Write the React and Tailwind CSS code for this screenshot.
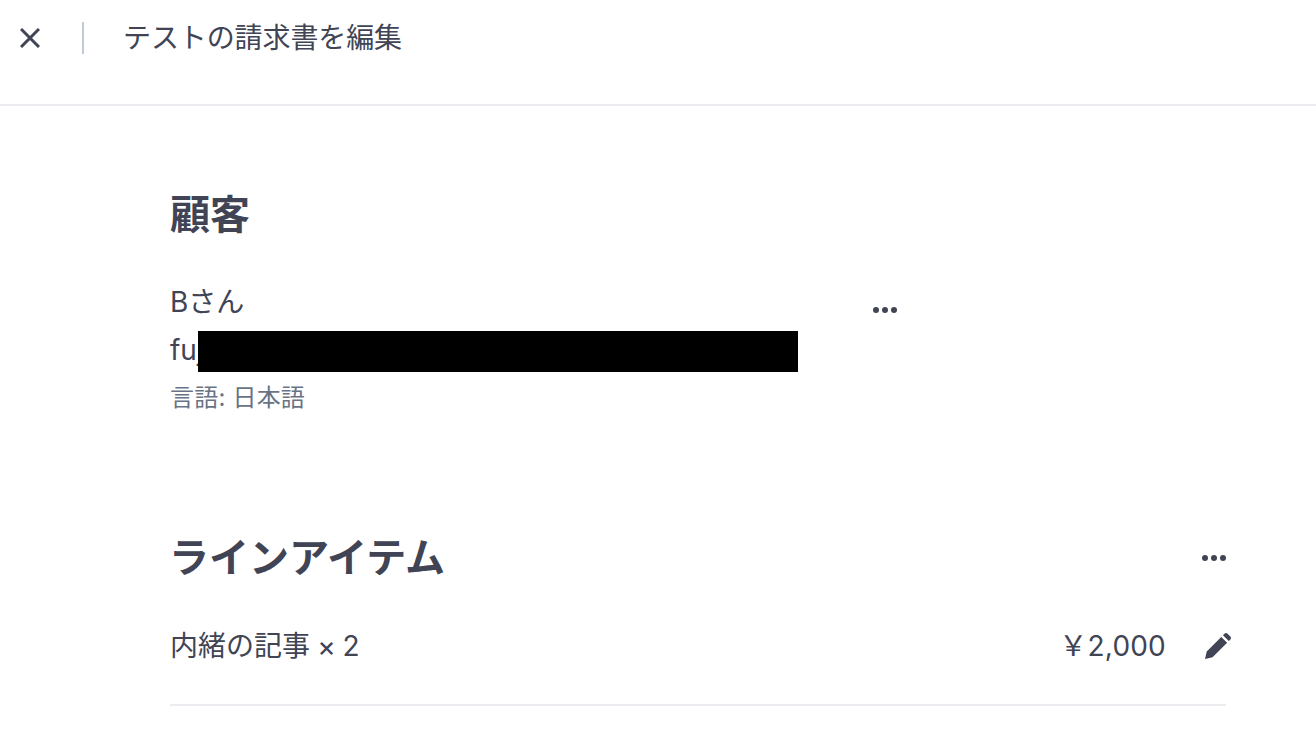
const fontStack = "font-['Inter','Noto_Sans_CJK_JP',sans-serif]";

function MoreDots() {
  return (
    <svg width="24" height="6" viewBox="0 0 24 6" fill="#404454" aria-hidden>
      <circle cx="3" cy="3" r="3" />
      <circle cx="12" cy="3" r="3" />
      <circle cx="21" cy="3" r="3" />
    </svg>
  );
}

export default function App() {
  return (
    <div className={`${fontStack} h-[734px] overflow-hidden bg-white text-[#404454]`}>
      {/* Header */}
      <header className="flex h-[106px] border-b-2 border-[#ebebf0] pl-[20px] pt-[22px]">
        <div className="flex h-[32px] items-center">
          <svg width="20" height="20" viewBox="0 0 20 20" fill="none" stroke="#404454" strokeWidth="3" aria-hidden>
            <path d="M1 1l18 18M19 1L1 19" />
          </svg>
          <div className="ml-[42px] h-[32px] w-[2px] bg-[#c1c9d2]" />
          <h1 className="ml-[39px] text-[28px] leading-[32px] tracking-[-0.1px]">テストの請求書を編集</h1>
        </div>
      </header>

      <main className="pl-[170px] pr-[90px] pt-[85px]">
        {/* Customer */}
        <section>
          <h2 className="text-[40px] font-bold leading-[48px]">顧客</h2>
          <div className="mt-[39px] flex w-[727px] items-center justify-between">
            <div className="relative">
              <p className="text-[28px] leading-[48px]">Bさん</p>
              <p className="text-[28px] leading-[48px]">fuj</p>
              <div className="absolute left-[28px] top-[53px] h-[41px] w-[600px] bg-black" />
              <p className="text-[24px] leading-[48px] tracking-[0.2px] text-[#687385]">言語: 日本語</p>
            </div>
            <div className="mb-[80px]">
              <MoreDots />
            </div>
          </div>
        </section>

        {/* Line items */}
        <section className="mt-[112px]">
          <div className="flex items-center justify-between">
            <h2 className="-ml-[1px] text-[40px] font-bold leading-[48px]">ラインアイテム</h2>
            <MoreDots />
          </div>
          <div className="mt-[44px] flex items-center justify-between border-b-2 border-[#ebebf0] pb-[38px]">
            <span className="text-[28px] leading-[40px]">
              内緒の記事<span className="tracking-[-0.6px]"> × 2</span>
            </span>
            <div className="-mr-[5px] flex items-center">
              <span className="text-[28px] leading-[40px] tracking-[0.2px]">{"\uFFE5"}2,000</span>
              <svg className="ml-[39px]" width="26" height="26" viewBox="0 0 24 24" fill="#404454" aria-hidden>
                <path d="M0 24l1.600-7L15 3.600 20.400 9 7 22.400 0 24zM16.600 2l1.400-1.400c.8-.8 2-.8 2.800 0l2.600 2.600c.8.8.8 2 0 2.800L22 7.400 16.600 2z" />
              </svg>
            </div>
          </div>
        </section>
      </main>
    </div>
  );
}
